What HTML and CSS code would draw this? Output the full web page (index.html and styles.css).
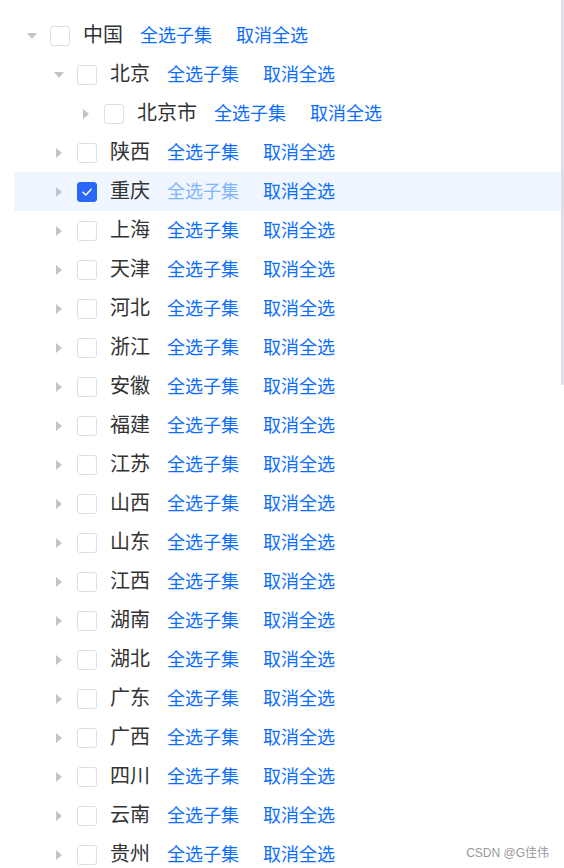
FILE: index.html
```html
<!DOCTYPE html>
<html lang="zh">
<head>
<meta charset="utf-8">
<link rel="stylesheet" href="styles.css">
</head>
<body>
<div class="page">
  <div class="tree">
    <div class="row lv0"><span class="arrow down"></span><span class="cb"></span><span class="label">中国</span><a class="link">全选子集</a><a class="link">取消全选</a></div>
    <div class="row lv1"><span class="arrow down"></span><span class="cb"></span><span class="label">北京</span><a class="link">全选子集</a><a class="link">取消全选</a></div>
    <div class="row lv2"><span class="arrow right"></span><span class="cb"></span><span class="label">北京市</span><a class="link">全选子集</a><a class="link">取消全选</a></div>
    <div class="row lv1"><span class="arrow right"></span><span class="cb"></span><span class="label">陕西</span><a class="link">全选子集</a><a class="link">取消全选</a></div>
    <div class="row lv1 active"><span class="arrow right"></span><span class="cb checked"><svg viewBox="0 0 20 20" width="20" height="20"><path d="M5.5 10.2 L8.7 13.3 L14.6 7" fill="none" stroke="#fff" stroke-width="1.6" stroke-linecap="round" stroke-linejoin="round"/></svg></span><span class="label">重庆</span><a class="link disabled">全选子集</a><a class="link">取消全选</a></div>
    <div class="row lv1"><span class="arrow right"></span><span class="cb"></span><span class="label">上海</span><a class="link">全选子集</a><a class="link">取消全选</a></div>
    <div class="row lv1"><span class="arrow right"></span><span class="cb"></span><span class="label">天津</span><a class="link">全选子集</a><a class="link">取消全选</a></div>
    <div class="row lv1"><span class="arrow right"></span><span class="cb"></span><span class="label">河北</span><a class="link">全选子集</a><a class="link">取消全选</a></div>
    <div class="row lv1"><span class="arrow right"></span><span class="cb"></span><span class="label">浙江</span><a class="link">全选子集</a><a class="link">取消全选</a></div>
    <div class="row lv1"><span class="arrow right"></span><span class="cb"></span><span class="label">安徽</span><a class="link">全选子集</a><a class="link">取消全选</a></div>
    <div class="row lv1"><span class="arrow right"></span><span class="cb"></span><span class="label">福建</span><a class="link">全选子集</a><a class="link">取消全选</a></div>
    <div class="row lv1"><span class="arrow right"></span><span class="cb"></span><span class="label">江苏</span><a class="link">全选子集</a><a class="link">取消全选</a></div>
    <div class="row lv1"><span class="arrow right"></span><span class="cb"></span><span class="label">山西</span><a class="link">全选子集</a><a class="link">取消全选</a></div>
    <div class="row lv1"><span class="arrow right"></span><span class="cb"></span><span class="label">山东</span><a class="link">全选子集</a><a class="link">取消全选</a></div>
    <div class="row lv1"><span class="arrow right"></span><span class="cb"></span><span class="label">江西</span><a class="link">全选子集</a><a class="link">取消全选</a></div>
    <div class="row lv1"><span class="arrow right"></span><span class="cb"></span><span class="label">湖南</span><a class="link">全选子集</a><a class="link">取消全选</a></div>
    <div class="row lv1"><span class="arrow right"></span><span class="cb"></span><span class="label">湖北</span><a class="link">全选子集</a><a class="link">取消全选</a></div>
    <div class="row lv1"><span class="arrow right"></span><span class="cb"></span><span class="label">广东</span><a class="link">全选子集</a><a class="link">取消全选</a></div>
    <div class="row lv1"><span class="arrow right"></span><span class="cb"></span><span class="label">广西</span><a class="link">全选子集</a><a class="link">取消全选</a></div>
    <div class="row lv1"><span class="arrow right"></span><span class="cb"></span><span class="label">四川</span><a class="link">全选子集</a><a class="link">取消全选</a></div>
    <div class="row lv1"><span class="arrow right"></span><span class="cb"></span><span class="label">云南</span><a class="link">全选子集</a><a class="link">取消全选</a></div>
    <div class="row lv1"><span class="arrow right"></span><span class="cb"></span><span class="label">贵州</span><a class="link">全选子集</a><a class="link">取消全选</a></div>
  </div>
  <div class="scrollbar"></div>
  <div class="watermark">CSDN @G佳伟</div>
</div>
</body>
</html>
```

FILE: styles.css
```css
html, body {
  margin: 0;
  padding: 0;
  overflow: hidden;
  background: #fff;
}
.page {
  position: relative;
  width: 564px;
  height: 868px;
  overflow: hidden;
  font-family: "Noto Sans CJK SC", "Noto Sans", sans-serif;
}
.tree {
  padding: 16px 3px 0 14px;
}
.row {
  display: flex;
  align-items: center;
  height: 39px;
  box-sizing: border-box;
}
.row.active {
  background: #eff6ff;
}
.lv0 { padding-left: 12px; }
.lv1 { padding-left: 39px; }
.lv2 { padding-left: 66px; }
.arrow {
  width: 12px;
  height: 12px;
  margin-right: 12px;
  position: relative;
  flex: none;
}
.arrow::before {
  content: "";
  position: absolute;
  width: 0;
  height: 0;
}
.arrow.down::before {
  left: 1px;
  top: 3px;
  border-left: 5px solid transparent;
  border-right: 5px solid transparent;
  border-top: 6px solid #c0c4cc;
}
.arrow.right::before {
  left: 3px;
  top: 1px;
  border-top: 5px solid transparent;
  border-bottom: 5px solid transparent;
  border-left: 6px solid #c0c4cc;
}
.cb {
  width: 20px;
  height: 20px;
  box-sizing: border-box;
  border: 1px solid #dcdfe6;
  border-radius: 3px;
  background: #fff;
  margin-right: 13px;
  flex: none;
  display: flex;
  align-items: center;
  justify-content: center;
}
.cb.checked {
  background: #2a67f6;
  border-color: #2a67f6;
}
.cb svg {
  display: block;
}
.label {
  font-size: 20px;
  color: #333;
  margin-right: 17px;
  margin-bottom: 4px;
  line-height: 1;
}
.link {
  font-size: 18px;
  color: #0d6efd;
  margin-right: 24px;
  margin-bottom: 4px;
  line-height: 1;
  cursor: pointer;
}
.link.disabled {
  color: #7fb5ff;
}
.scrollbar {
  position: absolute;
  right: 0;
  top: 0;
  width: 3px;
  height: 385px;
  background: #dddee6;
}
.watermark {
  position: absolute;
  right: 15px;
  bottom: 8px;
  font-family: "Liberation Sans", "Noto Sans CJK SC", sans-serif;
  font-size: 12px;
  color: #999;
}
```
